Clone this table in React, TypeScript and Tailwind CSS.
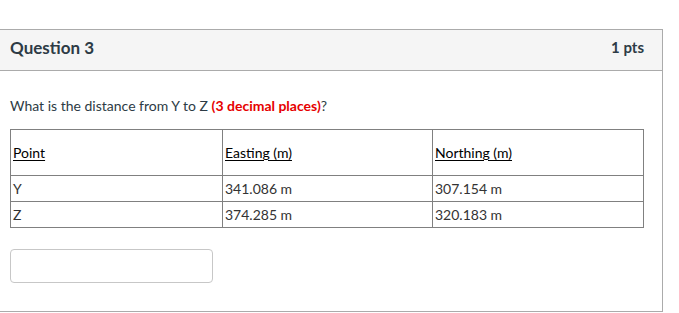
import React from 'react';

interface Row {
  point: string;
  easting: string;
  northing: string;
}

const rows: Row[] = [
  { point: 'Y', easting: '341.086 m', northing: '307.154 m' },
  { point: 'Z', easting: '374.285 m', northing: '320.183 m' },
];

const cell = 'border border-[#808080] px-[2px] text-left align-middle';
const head = `${cell} font-normal text-black underline underline-offset-2`;

const App: React.FC = () => {
  return (
    <div className="w-[679px] h-[313px] bg-white pt-[29px] font-['Lato','Liberation_Sans',sans-serif] text-[#2d3b45] overflow-hidden">
      <div className="w-[663px] h-[283px] border-t border-r border-b border-[#ababab]">
        {/* question header */}
        <div className="h-[41px] bg-[#f5f5f5] border-b border-[#ababab] flex items-center justify-between pl-[10px] pr-[18px] pb-[5px]">
          <h2 className="text-[17px] font-bold leading-none">Question 3</h2>
          <div className="text-[15px] font-bold leading-none">1 pts</div>
        </div>

        <div className="px-[10px] pt-[25px]">
          <p className="text-[14px] leading-[20px]">
            What is the distance from Y to Z{' '}
            <span className="text-[#e60000] font-bold">(3 decimal places)</span>?
          </p>

          <table className="mt-[13px] w-[634px] border-collapse text-[14px] text-[#333] table-fixed">
            <thead>
              <tr className="h-[46px]">
                <th className={`${head} w-[212px]`}>Point</th>
                <th className={`${head} w-[210px]`}>Easting (m)</th>
                <th className={head}>Northing (m)</th>
              </tr>
            </thead>
            <tbody>
              {rows.map((r) => (
                <tr key={r.point} className="h-[26px]">
                  <td className={cell}>{r.point}</td>
                  <td className={cell}>{r.easting}</td>
                  <td className={cell}>{r.northing}</td>
                </tr>
              ))}
            </tbody>
          </table>

          <input
            type="text"
            className="block mt-[21px] w-[203px] h-[34px] border border-[#c7c7c7] rounded-[4px] bg-white outline-none"
          />
        </div>
      </div>
    </div>
  );
};

export default App;
